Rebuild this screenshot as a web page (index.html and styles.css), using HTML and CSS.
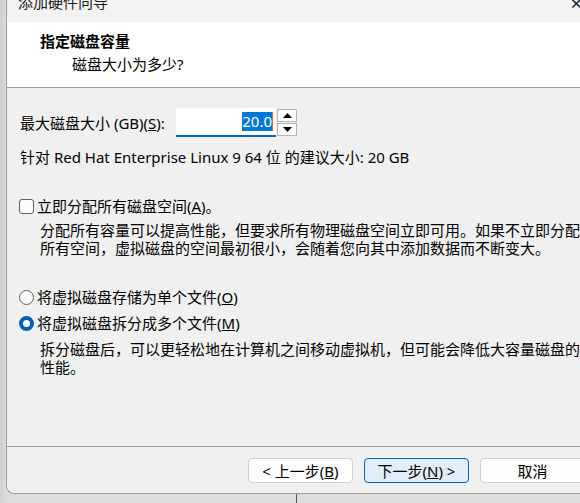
FILE: index.html
```html
<!DOCTYPE html>
<html>
<head>
<meta charset="utf-8">
<link rel="stylesheet" href="styles.css">
</head>
<body>
<div class="screen">
  <div class="window">
    <div class="titlebar">
      <span class="title">添加硬件向导</span>
      <span class="close">✕</span>
    </div>
    <div class="header">
      <div class="h-title">指定磁盘容量</div>
      <div class="h-sub">磁盘大小为多少?</div>
    </div>
    <div class="content">
      <div class="size-row">
        <span class="label">最大磁盘大小 (GB)(<u>S</u>):</span>
        <div class="input"><span class="sel">20.0</span><span class="caret"></span></div>
        <div class="spin">
          <span class="spin-btn"><svg width="9" height="5" viewBox="0 0 9 5"><path d="M0 5 L4.5 0 L9 5 Z" fill="#000"/></svg></span>
          <span class="spin-btn"><svg width="9" height="5" viewBox="0 0 9 5"><path d="M0 0 L4.5 5 L9 0 Z" fill="#000"/></svg></span>
        </div>
      </div>
      <div class="rec">针对 Red Hat Enterprise Linux 9 64 位 的建议大小: 20 GB</div>
      <div class="opt opt-check"><span class="checkbox"></span><span>立即分配所有磁盘空间(<u>A</u>)。</span></div>
      <div class="desc">
        <div>分配所有容量可以提高性能，但要求所有物理磁盘空间立即可用。如果不立即分配</div>
        <div>所有空间，虚拟磁盘的空间最初很小，会随着您向其中添加数据而不断变大。</div>
      </div>
      <div class="opt opt-radio1"><span class="radio"></span><span>将虚拟磁盘存储为单个文件(<u>O</u>)</span></div>
      <div class="opt opt-radio2"><span class="radio checked"></span><span>将虚拟磁盘拆分成多个文件(<u>M</u>)</span></div>
      <div class="desc desc2">
        <div>拆分磁盘后，可以更轻松地在计算机之间移动虚拟机，但可能会降低大容量磁盘的</div>
        <div>性能。</div>
      </div>
    </div>
    <div class="footer">
      <span class="btn">&lt; 上一步(<u>B</u>)</span>
      <span class="btn primary">下一步(<u>N</u>) &gt;</span>
      <span class="btn">取消</span>
    </div>
  </div>
  <div class="under"><span class="under-line"></span></div>
</div>
</body>
</html>
```
FILE: styles.css
```css
html, body {
  margin: 0;
  padding: 0;
}
body {
  width: 580px;
  height: 503px;
  overflow: hidden;
  background: #c8c8c8;
  font-family: "Noto Sans", "Noto Sans CJK SC", sans-serif;
  font-size: 15px;
  color: #000;
}
.screen {
  width: 580px;
  height: 503px;
  overflow: hidden;
  background: linear-gradient(to right, #cfcfcf 0px, #dcdcdc 6px, #dcdcdc 100%);
}
.window {
  margin-left: 6px;
  width: 620px;
  height: 494px;
  box-sizing: border-box;
  border-left: 1px solid #9c9c9c;
  border-bottom: 1px solid #9c9c9c;
  border-bottom-left-radius: 8px;
  background: #f0f0f0;
  display: flex;
  flex-direction: column;
  overflow: hidden;
}
.titlebar {
  height: 22px;
  background: #f3f3f3;
  display: flex;
  align-items: flex-start;
  overflow: hidden;
  position: relative;
}
.title {
  margin-left: 11px;
  margin-top: -9px;
  line-height: 22px;
  font-size: 15px;
  color: #1a1a1a;
}
.close {
  position: absolute;
  left: 563px;
  top: -7px;
  font-size: 15px;
  line-height: 20px;
  color: #222;
}
.header {
  height: 66px;
  background: #fff;
  border-bottom: 1px solid #a0a0a0;
  box-sizing: border-box;
  padding-left: 33px;
  padding-top: 9px;
}
.h-title {
  font-weight: bold;
  line-height: 20px;
}
.h-sub {
  margin-left: 32px;
  margin-top: 3px;
  line-height: 20px;
}
.content {
  flex: 1;
  padding-left: 13px;
  white-space: nowrap;
}
.size-row {
  display: flex;
  align-items: center;
  margin-top: 20px;
  height: 29px;
}
.label {
  width: 156px;
}
.input {
  width: 100px;
  height: 29px;
  box-sizing: border-box;
  background: #fff;
  border-bottom: 2px solid #0067c0;
  display: flex;
  align-items: center;
  justify-content: flex-end;
  padding-right: 3px;
}
.sel {
  background: #0078d7;
  color: #fff;
  line-height: 19px;
}
.caret {
  width: 1px;
  height: 19px;
  background: #f7630c;
}
.spin {
  margin-left: 1px;
  width: 20px;
  height: 27px;
  display: flex;
  flex-direction: column;
  gap: 1px;
}
.spin-btn {
  flex: 1;
  border: 1px solid #b4b4b4;
  background: #fff;
  display: flex;
  align-items: center;
  justify-content: center;
}
.rec {
  margin-top: 10px;
  line-height: 20px;
}
.opt {
  display: flex;
  align-items: center;
  height: 20px;
  line-height: 20px;
}
.opt-check {
  margin-top: 29px;
}
.checkbox {
  width: 15px;
  height: 15px;
  box-sizing: border-box;
  border: 1px solid #616161;
  border-radius: 3px;
  margin-left: -1px;
  margin-right: 3px;
  background: #fbfbfb;
}
.radio {
  width: 15px;
  height: 15px;
  box-sizing: border-box;
  border: 1px solid #616161;
  border-radius: 50%;
  margin-left: -1px;
  margin-right: 3px;
  background: #fbfbfb;
}
.radio.checked {
  border: 4px solid #005fb8;
  background: #fff;
}
.desc {
  margin-left: 20px;
  line-height: 18px;
  margin-top: 5px;
}
.desc2 {
  margin-top: 7px;
}
.opt-radio1 {
  margin-top: 30px;
}
.opt-radio2 {
  margin-top: 6px;
}
.footer {
  height: 47px;
  box-sizing: border-box;
  border-top: 1px solid #a0a0a0;
  display: flex;
  align-items: flex-start;
  padding-top: 11px;
  padding-left: 241px;
  gap: 11px;
}
.btn {
  width: 105px;
  height: 25px;
  box-sizing: border-box;
  border: 1px solid #d0d0d0;
  border-radius: 4px;
  background: #fdfdfd;
  display: flex;
  align-items: center;
  justify-content: center;
  line-height: 20px;
}
.btn.primary {
  border-color: #0067c0;
  background: #e0eef9;
}
.under {
  height: 9px;
  display: flex;
}
.under-line {
  margin-left: 296px;
  width: 1px;
  height: 9px;
  background: #555;
}
```
